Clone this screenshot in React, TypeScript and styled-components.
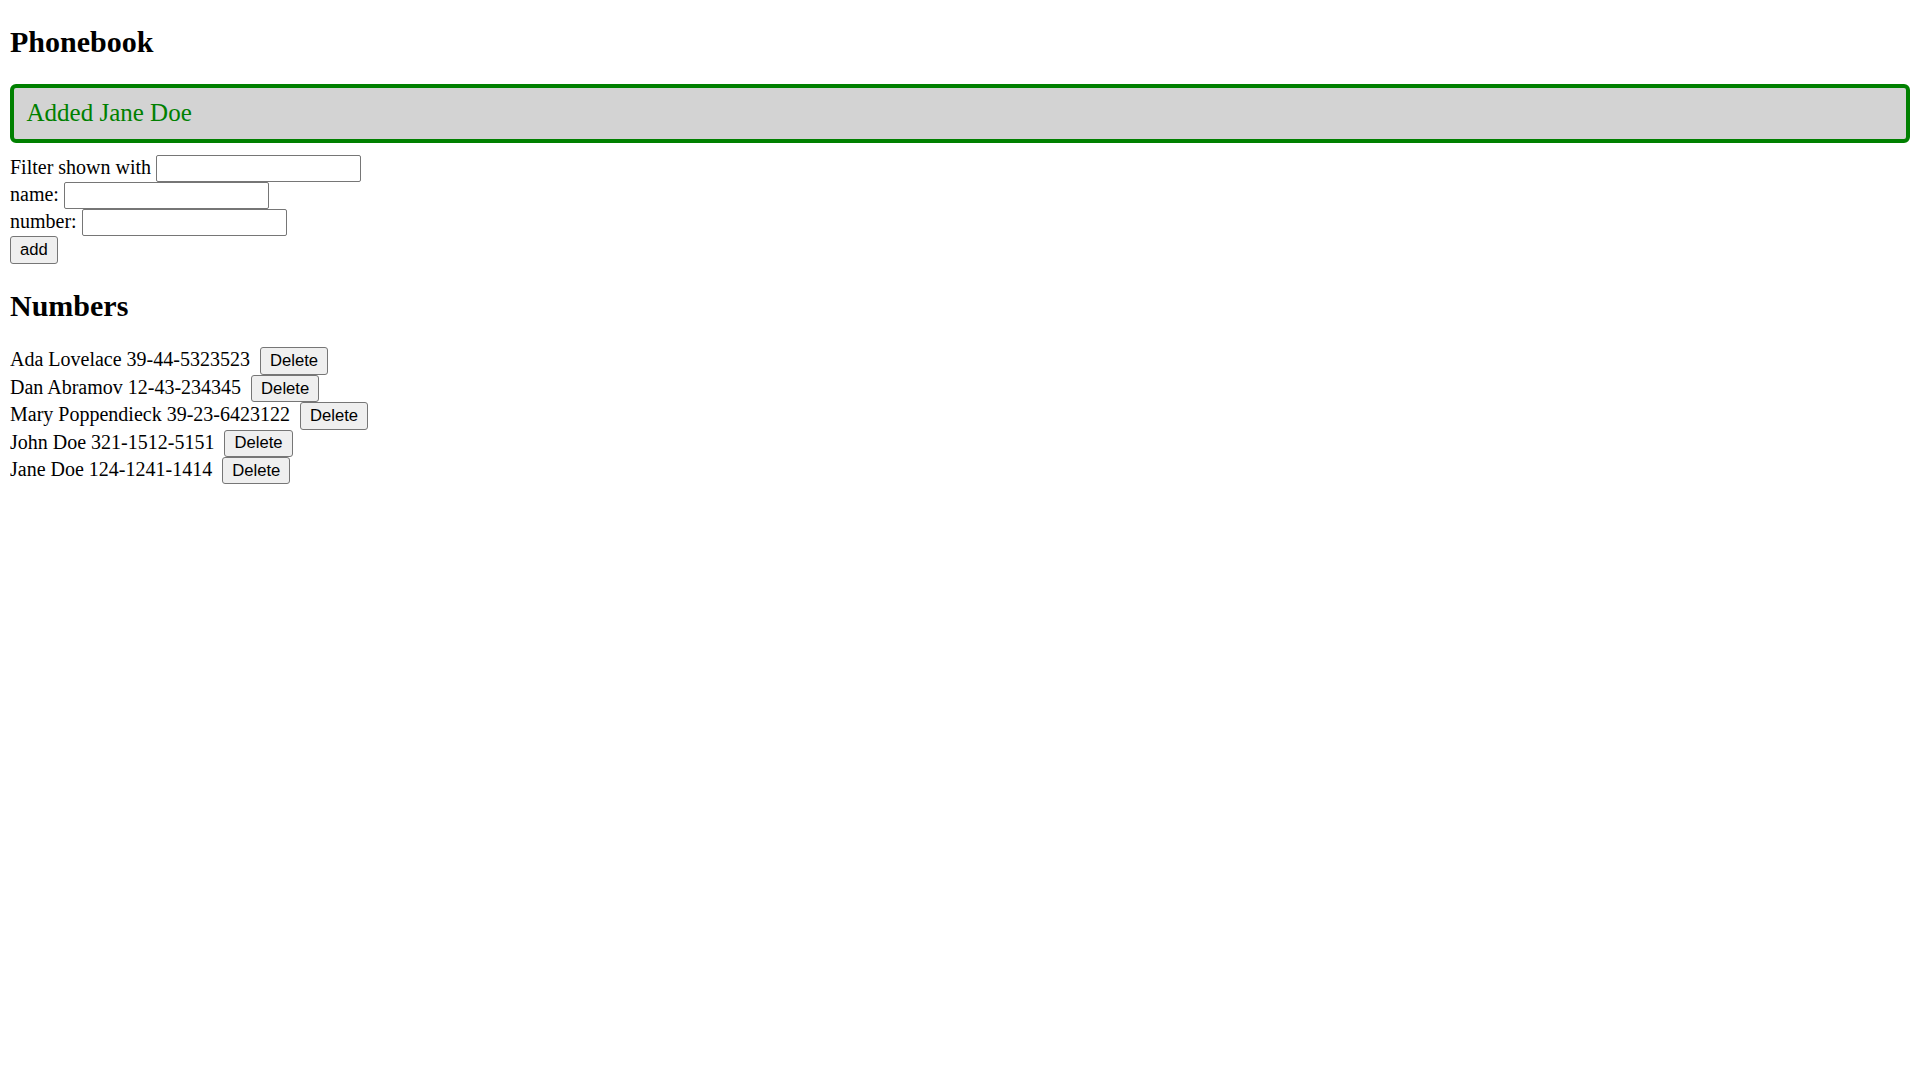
import React from "react";
import styled, { createGlobalStyle } from "styled-components";

const GlobalStyle = createGlobalStyle`
  html, body {
    background: #ffffff;
  }
  body {
    margin: 0 10px;
    font-family: "Liberation Serif", "Times New Roman", serif;
    font-size: 20px;
    color: #000000;
  }
`;

const Page = styled.div`
  display: block;
`;

const Heading = styled.h2`
  font-family: "Liberation Serif", "Times New Roman", serif;
  font-size: 30px;
  font-weight: bold;
  margin: 24.9px 0;
`;

const Notification = styled.div<{ $kind: "success" | "error" }>`
  color: ${(p) => (p.$kind === "success" ? "green" : "red")};
  background: lightgrey;
  font-size: 25px;
  border: 4px solid ${(p) => (p.$kind === "success" ? "green" : "red")};
  border-radius: 6px;
  padding: 11.5px 12.5px;
  margin-bottom: 12.5px;
`;

const Row = styled.div`
  display: block;
`;

const TextInput = styled.input`
  box-sizing: border-box;
  width: 205px;
  height: 27px;
  margin: 0;
  padding: 1px 3px;
  border: 1px solid #767676;
  border-radius: 2px;
  background: #ffffff;
  font-family: "Liberation Sans", Arial, sans-serif;
  font-size: 16.67px;
  vertical-align: baseline;
`;

const Button = styled.button<{ $gap?: boolean }>`
  margin: 0 0 0 ${(p) => (p.$gap ? "5px" : "0")};
  padding: 2.7px 9px;
  border: 1px solid #767676;
  border-radius: 3px;
  background: #efefef;
  color: #000000;
  font-family: "Liberation Sans", Arial, sans-serif;
  font-size: 16.67px;
  line-height: normal;
  cursor: pointer;
`;

const persons = [
  { name: "Ada Lovelace", number: "39-44-5323523" },
  { name: "Dan Abramov", number: "12-43-234345" },
  { name: "Mary Poppendieck", number: "39-23-6423122" },
  { name: "John Doe", number: "321-1512-5151" },
  { name: "Jane Doe", number: "124-1241-1414" },
];

export default function App() {
  return (
    <Page>
      <GlobalStyle />
      <Heading>Phonebook</Heading>
      <Notification $kind="success">Added Jane Doe</Notification>
      <Row>
        Filter shown with <TextInput />
      </Row>
      <form onSubmit={(e) => e.preventDefault()}>
        <Row>
          name: <TextInput />
        </Row>
        <Row>
          number: <TextInput />
        </Row>
        <Row>
          <Button type="submit">add</Button>
        </Row>
      </form>
      <Heading>Numbers</Heading>
      {persons.map((p) => (
        <Row key={p.name}>
          {p.name} {p.number} <Button $gap>Delete</Button>
        </Row>
      ))}
    </Page>
  );
}
